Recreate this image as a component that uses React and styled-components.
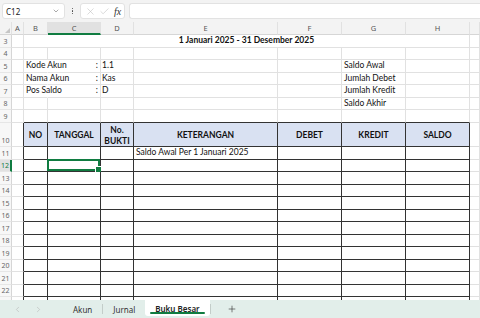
import React from 'react'
import styled, { createGlobalStyle } from 'styled-components'
import { ChevronDown, ChevronLeft, ChevronRight, Plus, X, Check } from 'lucide-react'

const GlobalStyle = createGlobalStyle`
  html, body { margin: 0; padding: 0; background: #ffffff; }
  body { font-family: "Noto Sans", "Open Sans", sans-serif; }
  * { box-sizing: border-box; }
`

const COLS = '12px 12px 24px 53px 33px 144px 64px 64px 64px 1fr'
const GRID = '#e1e1e1'
const DARK = '#333333'
const GREEN = '#107c41'

const Window = styled.div`
  width: 480px;
  height: 318px;
  display: flex;
  flex-direction: column;
  overflow: hidden;
  background: #ffffff;
`
const FormulaBar = styled.div`
  height: 22px;
  flex: none;
  display: flex;
  align-items: flex-start;
  gap: 4px;
  padding: 3px 0 0 2px;
  background: #f3f3f3;
`
const NameBox = styled.div`
  width: 63px;
  height: 16px;
  background: #ffffff;
  border: 1px solid #e2e2e2;
  border-radius: 3px;
  display: flex;
  align-items: center;
  justify-content: space-between;
  padding: 0 4px 0 3px;
  font-size: 8px;
  color: #222;
`
const Dots = styled.div`
  width: 7px;
  height: 16px;
  display: flex;
  flex-direction: column;
  align-items: center;
  justify-content: center;
  gap: 1px;
  span {
    width: 1.5px;
    height: 1.5px;
    border-radius: 50%;
    background: #444;
  }
`
const FuncBox = styled.div`
  width: 45px;
  height: 16px;
  background: #ffffff;
  border: 1px solid #e2e2e2;
  border-radius: 3px;
  display: flex;
  align-items: center;
  gap: 3px;
  padding: 0 2px 0 4px;
  color: #bdbdbd;
`
const Fx = styled.span`
  font-family: "Liberation Serif", serif;
  font-style: italic;
  font-size: 10px;
  color: #333;
  margin-left: 1px;
`
const Input = styled.div`
  flex: 1;
  height: 16px;
  background: #ffffff;
  border: 1px solid #e2e2e2;
  border-right: none;
  border-radius: 3px 0 0 3px;
`

const Sheet = styled.div`
  flex: 1;
  overflow: hidden;
  display: flex;
  flex-direction: column;
`
const Row = styled.div`
  display: grid;
  grid-template-columns: ${COLS};
  height: ${p => p.$h}px;
  flex: none;
`
const ColHead = styled.div`
  display: flex;
  align-items: center;
  justify-content: center;
  font-size: 7.5px;
  color: #555;
  background: ${p => (p.$sel ? '#e1e1e1' : '#f3f3f3')};
  border-right: 1px solid #e1e1e1;
  border-bottom: ${p => (p.$sel ? `2px solid ${GREEN}` : '1px solid #d6d6d6')};
  position: relative;
`
const Corner = styled(ColHead)`
  &::after {
    content: '';
    position: absolute;
    right: 1px;
    bottom: 1px;
    border-left: 5px solid transparent;
    border-bottom: 5px solid #c6c6c6;
  }
`
const RowHead = styled.div`
  display: flex;
  align-items: flex-end;
  justify-content: center;
  padding-bottom: 1px;
  font-size: 7px;
  color: ${p => (p.$sel ? GREEN : '#666')};
  background: ${p => (p.$sel ? '#e1e1e1' : '#f7f7f7')};
  border-right: ${p => (p.$sel ? `2px solid ${GREEN}` : '1px solid #d6d6d6')};
  border-bottom: 1px solid #e6e6e6;
`
const Cell = styled.div`
  position: relative;
  display: flex;
  align-items: center;
  justify-content: ${p => p.$align || 'flex-start'};
  text-align: ${p => (p.$align === 'center' ? 'center' : 'left')};
  padding: ${p => (p.$pt ? '2px 2px 0' : '0 2px')};
  grid-column: ${p => (p.$span ? `span ${p.$span}` : 'auto')};
  font-family: Lato, "Liberation Sans", sans-serif;
  font-size: 8.5px;
  line-height: 1.25;
  font-weight: ${p => (p.$bold ? 700 : 400)};
  color: #111;
  white-space: nowrap;
  overflow: visible;
  z-index: ${p => (p.$over ? 1 : 0)};
  background: ${p => p.$bg || 'transparent'};
  border-right: 1px solid ${p => (p.$darkR ? DARK : p.$noR ? 'transparent' : GRID)};
  border-bottom: 1px solid ${p => (p.$darkB ? DARK : GRID)};
`
const Selection = styled.div`
  position: absolute;
  inset: -1px 0 0 -1px;
  border: 2px solid ${GREEN};
  &::after {
    content: '';
    position: absolute;
    right: -4px;
    bottom: -4px;
    width: 5px;
    height: 5px;
    background: ${GREEN};
    border: 1px solid #fff;
  }
`

const TabBar = styled.div`
  height: 18px;
  flex: none;
  display: flex;
  align-items: stretch;
  background: #e2eeea;
  color: #444;
  font-size: 8px;
`
const Arrows = styled.div`
  width: 63px;
  display: flex;
  align-items: center;
  gap: 12px;
  padding-left: 13px;
  color: #b4b4b4;
`
const Tab = styled.div`
  display: flex;
  align-items: center;
  padding: 0 10px;
  position: relative;
  font-weight: ${p => (p.$active ? 600 : 400)};
  color: ${p => (p.$active ? '#222' : '#333')};
  background: ${p => (p.$active ? '#ffffff' : 'transparent')};
  border-radius: ${p => (p.$active ? '0 0 3px 3px' : '0')};
  margin-bottom: ${p => (p.$active ? '2px' : '0')};
  &::after {
    content: '';
    display: ${p => (p.$active ? 'block' : 'none')};
    position: absolute;
    left: 5px;
    right: 5px;
    bottom: 2px;
    height: 2px;
    border-radius: 1px;
    background: ${GREEN};
  }
`
const Sep = styled.div`
  width: 1px;
  margin: 4px 0;
  background: #c3cdc9;
`
const AddTab = styled.div`
  display: flex;
  align-items: center;
  padding-left: 16px;
  color: #333;
`

const letters = ['A', 'B', 'C', 'D', 'E', 'F', 'G', 'H', '']
const headers = ['NO', 'TANGGAL', 'No.|BUKTI', 'KETERANGAN', 'DEBET', 'KREDIT', 'SALDO']

const info = {
  5: ['Kode Akun', '1.1', 'Saldo Awal'],
  6: ['Nama Akun', 'Kas', 'Jumlah Debet'],
  7: ['Pos Saldo', 'D', 'Jumlah Kredit'],
  8: [null, null, 'Saldo Akhir'],
}

function PlainRow({ n }) {
  const d = info[n]
  return (
    <Row $h={12.5}>
      <RowHead>{n}</RowHead>
      <Cell />
      <Cell $noR={!!(d && d[0])} $over>{d && d[0]}</Cell>
      <Cell $align="flex-end">{d && d[0] ? ':' : ''}</Cell>
      <Cell style={{ paddingLeft: 1 }}>{d && d[1]}</Cell>
      <Cell />
      <Cell />
      <Cell>{d && d[2]}</Cell>
      <Cell />
      <Cell />
    </Row>
  )
}

function TableRow({ n, text, sel, last }) {
  return (
    <Row $h={12.5}>
      <RowHead $sel={sel}>{last ? '' : n}</RowHead>
      <Cell $darkR />
      {[0, 1, 2, 3, 4, 5, 6].map(i => (
        <Cell key={i} $darkR $darkB>
          {i === 3 ? text : ''}
          {sel && i === 1 ? <Selection /> : null}
        </Cell>
      ))}
      <Cell />
    </Row>
  )
}

export default function App() {
  const body = []
  for (let n = 11; n <= 23; n++) {
    body.push(
      <TableRow
        key={n}
        n={n}
        sel={n === 12}
        last={n === 23}
        text={n === 11 ? 'Saldo Awal Per 1 Januari 2025' : ''}
      />
    )
  }
  return (
    <Window>
      <GlobalStyle />
      <FormulaBar>
        <NameBox>
          C12
          <ChevronDown size={8} strokeWidth={1.5} color="#555" />
        </NameBox>
        <Dots>
          <span />
          <span />
          <span />
        </Dots>
        <FuncBox>
          <X size={11} strokeWidth={1.2} />
          <Check size={11} strokeWidth={1.2} />
          <Fx>fx</Fx>
        </FuncBox>
        <Input />
      </FormulaBar>
      <Sheet>
        <Row $h={13}>
          <Corner />
          {letters.map((l, i) => (
            <ColHead key={i} $sel={l === 'C'}>
              {l}
            </ColHead>
          ))}
        </Row>
        <Row $h={12.5}>
          <RowHead>3</RowHead>
          <Cell />
          <Cell $span={7} $align="center" $bold>
            1 Januari 2025 - 31 Desember 2025
          </Cell>
          <Cell />
        </Row>
        {[4, 5, 6, 7, 8].map(n => (
          <PlainRow key={n} n={n} />
        ))}
        <Row $h={13}>
          <RowHead>9</RowHead>
          <Cell />
          {[0, 1, 2, 3, 4, 5, 6].map(i => (
            <Cell key={i} $darkB />
          ))}
          <Cell />
        </Row>
        <Row $h={24}>
          <RowHead>10</RowHead>
          <Cell $darkR />
          {headers.map(h => (
            <Cell key={h} $darkR $darkB $bold $pt $align="center" $bg="#d9e1f2">
              {h.includes('|') ? (
                <span>
                  {h.split('|')[0]}
                  <br />
                  {h.split('|')[1]}
                </span>
              ) : (
                h
              )}
            </Cell>
          ))}
          <Cell />
        </Row>
        {body}
      </Sheet>
      <TabBar>
        <Arrows>
          <ChevronLeft size={9} strokeWidth={1.5} />
          <ChevronRight size={9} strokeWidth={1.5} />
        </Arrows>
        <Tab>Akun</Tab>
        <Sep />
        <Tab>Jurnal</Tab>
        <Tab $active>Buku Besar</Tab>
        <Sep />
        <AddTab>
          <Plus size={10} strokeWidth={1.5} />
        </AddTab>
      </TabBar>
    </Window>
  )
}
